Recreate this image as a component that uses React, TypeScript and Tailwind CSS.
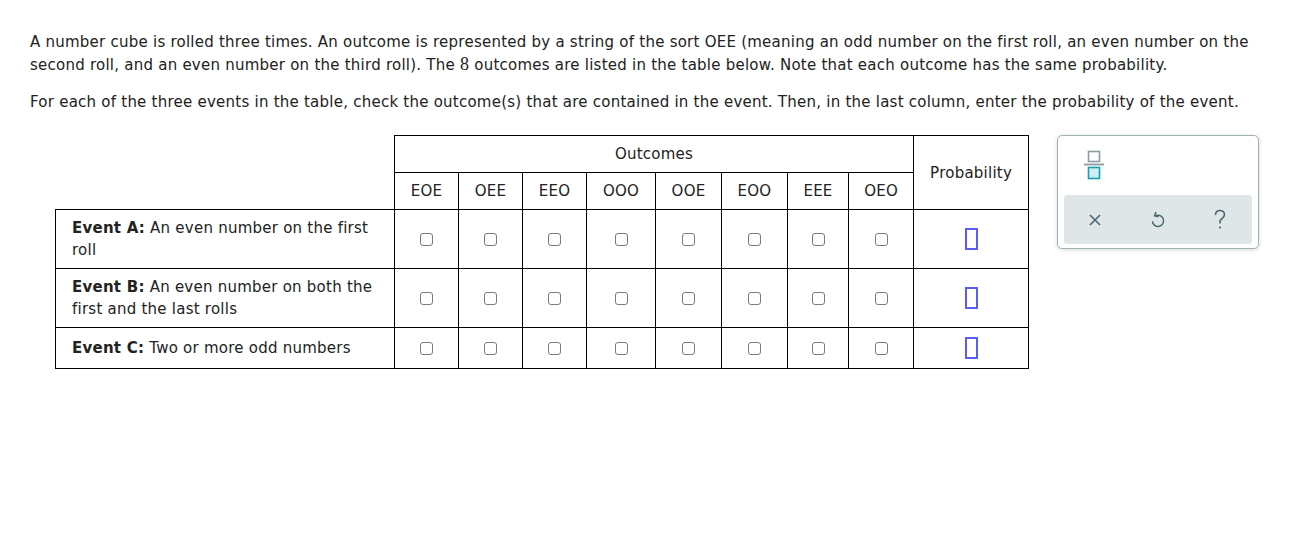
import React from "react";

const outcomes = ["EOE", "OEE", "EEO", "OOO", "OOE", "EOO", "EEE", "OEO"];
const colW = [64, 64, 64, 69, 66, 66, 61, 65];

const events = [
  { label: "Event A:", text: " An even number on the first roll", h: 59 },
  { label: "Event B:", text: " An even number on both the first and the last rolls", h: 59 },
  { label: "Event C:", text: " Two or more odd numbers", h: 41 },
];

function Box() {
  return <div className="w-[13px] h-[13px] border border-[#7a7a7a] rounded-[3px] bg-white mx-auto" />;
}

export default function App() {
  return (
    <div
      className="pt-[31px] pl-[30px] pr-[30px] text-[15px] leading-[22px] tracking-[0.24px] text-[#222]"
      style={{ fontFamily: '"DejaVu Sans", Verdana, sans-serif' }}
    >
      <p className="m-0">
        A number cube is rolled three times. An outcome is represented by a string of the sort OEE (meaning an odd number on the first roll, an even number on the second roll, and an even number on the third roll). The{" "}
        <span className="text-[18px]" style={{ fontFamily: '"Liberation Serif", serif' }}>8</span> outcomes are listed in the table below. Note that each outcome has the same probability.
      </p>
      <p className="mt-[15px]">
        For each of the three events in the table, check the outcome(s) that are contained in the event. Then, in the last column, enter the probability of the event.
      </p>
      <div className="flex items-start mt-[22px] ml-[25px]">
        <table className="border-collapse table-fixed" style={{ width: 974 }}>
          <colgroup>
            <col style={{ width: 339 }} />
            {colW.map((w, i) => (
              <col key={i} style={{ width: w }} />
            ))}
            <col style={{ width: 115 }} />
          </colgroup>
          <tbody>
            <tr className="h-[37px]">
              <td className="border-0"></td>
              <td colSpan={8} className="border border-black text-center align-middle p-0">
                Outcomes
              </td>
              <td rowSpan={2} className="border border-black text-center align-middle p-0">
                Probability
              </td>
            </tr>
            <tr className="h-[37px]">
              <td className="border-0 border-b border-black"></td>
              {outcomes.map((o) => (
                <td key={o} className="border border-black text-center align-middle p-0">
                  {o}
                </td>
              ))}
            </tr>
            {events.map((e) => (
              <tr key={e.label} style={{ height: e.h }}>
                <td className="border border-black align-middle pl-[16px] pr-[10px] py-0">
                  <span className="font-bold">{e.label}</span>
                  {e.text}
                </td>
                {outcomes.map((o) => (
                  <td key={o} className="border border-black align-middle p-0">
                    <Box />
                  </td>
                ))}
                <td className="border border-black align-middle p-0">
                  <div className="w-[13px] h-[22px] border-2 border-[#5b5bf5] bg-white mx-auto" />
                </td>
              </tr>
            ))}
          </tbody>
        </table>
        <div className="ml-[28px] w-[202px] h-[114px] border border-[#9fb0b6] rounded-[5px] bg-white shadow-[0_1px_4px_rgba(0,0,0,0.15)] flex flex-col">
          <div className="h-[59px] pl-[26px] pt-[14px]">
            <svg width="22" height="32" viewBox="0 0 22 32">
              <rect x="4.5" y="1.5" width="11" height="10" fill="white" stroke="#8c9ca3" strokeWidth="1.6" />
              <line x1="0" y1="14.5" x2="20" y2="14.5" stroke="#8c9ca3" strokeWidth="1.8" />
              <rect x="4.5" y="17.5" width="11" height="11" fill="#cdeef2" stroke="#1a9fb0" strokeWidth="1.6" />
            </svg>
          </div>
          <div className="mx-[6px] h-[49px] bg-[#dfe6e8] rounded-[3px] flex items-center text-[#4c6670]">
            <div className="w-[62px] flex justify-center">
              <svg width="14" height="14" viewBox="0 0 14 14">
                <path d="M2 2 L12 12 M12 2 L2 12" stroke="#4c6670" strokeWidth="1.6" fill="none" />
              </svg>
            </div>
            <div className="w-[63px] flex justify-center">
              <svg width="16" height="20" viewBox="0 0 16 20">
                <path d="M5.2 6 A5.6 5.6 0 1 1 2.4 11.2" stroke="#4c6670" strokeWidth="1.5" fill="none" />
                <path d="M6 2 L4.6 5.8 L8.4 6.8" stroke="#4c6670" strokeWidth="1.5" fill="none" />
              </svg>
            </div>
            <div className="w-[62px] flex justify-center">
              <svg width="14" height="22" viewBox="0 0 14 22">
                <path d="M2.5 6 C2.5 2.5 5 1.5 7 1.5 C9.5 1.5 11.5 3.2 11.5 5.8 C11.5 8.5 8 9.5 7 12 L7 14.5" stroke="#4c6670" strokeWidth="1.6" fill="none" />
                <circle cx="7" cy="18.5" r="1.1" fill="#4c6670" />
              </svg>
            </div>
          </div>
        </div>
      </div>
    </div>
  );
}
